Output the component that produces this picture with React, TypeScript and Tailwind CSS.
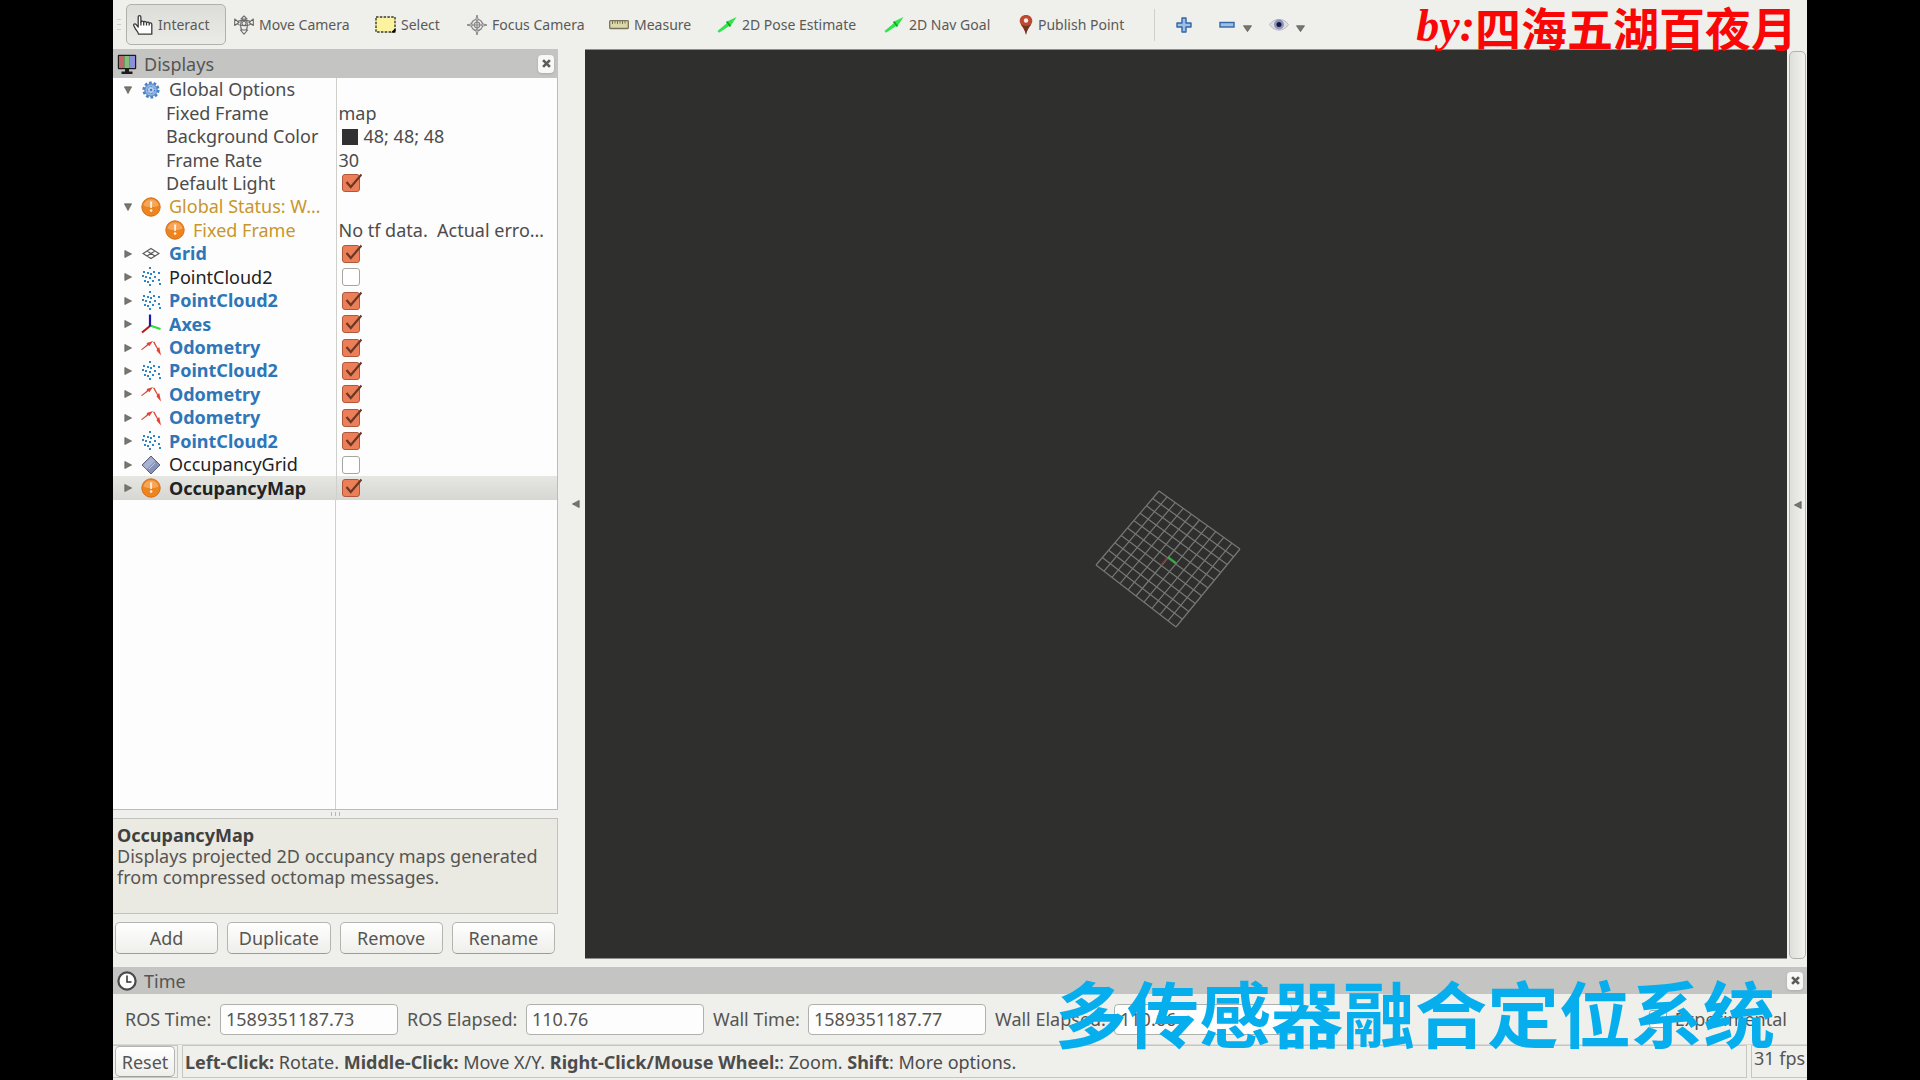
import type { ReactNode } from "react";
import clsx from "clsx";

/* ---------- icons ---------- */

function HandIcon() {
  return (
    <svg className="w-5 h-5 shrink-0" viewBox="0 0 20 20" fill="#fff" stroke="#3a3a3a" strokeWidth={1.3} strokeLinejoin="round">
      <path d="M5.2 12V2.2c0-2 2.7-2 2.7 0v5c.3-1.4 2.6-1.3 2.8.1.4-1.2 2.6-1 2.8.4.5-1 2.6-.8 2.7.6.5-.8 2.6-.6 2.600 1V19.200H5.500c0-2-1.500-3.200-3-5.200L.8 10.600C.2 9.200 2 8.200 3 9.400z" />
      <path d="M7.900 7v3.500M10.700 7.500v3M13.500 8v2.500M16.200 8.500v2" fill="none" />
    </svg>
  );
}

function MoveCameraIcon() {
  return (
    <svg className="w-5 h-5 shrink-0" viewBox="0 0 20 20" fill="#f4f4f2" stroke="#6a6a6a" strokeWidth={1.1} strokeLinejoin="round">
      <ellipse cx="10" cy="8" rx="7" ry="2.600" fill="none" />
      <ellipse cx="10" cy="10" rx="3.400" ry="6.500" fill="none" />
      <path d="M10 .8l3 3.200H7zM10 19.200l3.600-4.200H6.400zM.7 4l4.300 3.500L.7 10.500zM19.300 4L15 7.500l4.300 3z" />
      <circle cx="10" cy="8.500" r="2" />
    </svg>
  );
}

function SelectIcon() {
  return (
    <svg className="w-[21px] h-[17px] shrink-0" viewBox="0 0 21 17">
      <rect x="1" y="1" width="19" height="15" fill="#fbf3a0" stroke="#3d3b22" strokeWidth={1.400} strokeDasharray="2.500 1.300" />
      <path d="M20.500 12v4.500H16z" fill="#000" />
    </svg>
  );
}

function FocusIcon() {
  return (
    <svg className="w-5 h-5 shrink-0" viewBox="0 0 20 20" fill="none" stroke="#858585" strokeWidth={1.200}>
      <circle cx="10" cy="10" r="5.700" />
      <circle cx="10" cy="10" r="2.800" />
      <path d="M10 5v10M5 10h10" />
      <path d="M10 0L8.700 5h2.600zM10 20l-1.300-5h2.600zM0 10l5-1.300v2.600zM20 10l-5-1.300v2.600z" fill="#efefeb" strokeWidth={1} />
    </svg>
  );
}

function RulerIcon() {
  return (
    <svg className="w-5 h-[10px] shrink-0" viewBox="0 0 20 10">
      <rect x=".7" y=".7" width="18.600" height="7.800" rx=".8" fill="#dcd8a8" stroke="#77745a" strokeWidth={1.300} />
      <path d="M3.500 1v3M6 1v2.500M8.500 1v3M11 1v2.500M13.500 1v3M16 1v2.500" stroke="#77745a" />
    </svg>
  );
}

function ArrowIcon() {
  return (
    <svg className="w-5 h-4 shrink-0" viewBox="0 0 20 16">
      <path d="M19.500 0L9 5l.8 1.200L.5 14l1.500 1.800 9.800-6.600 1.200.9z" fill="#2ee648" />
      <path d="M9 5l4 5.100.8-1.600L10.500 4.300z" fill="#1a9c30" />
    </svg>
  );
}

function PinIcon() {
  return (
    <svg className="w-[14px] h-5 shrink-0" viewBox="0 0 14 20">
      <path d="M7 0C3 0 .7 2.700.7 6c0 4 5 6.500 6.300 13.800C8.300 12.500 13.300 10 13.300 6c0-3.300-2.300-6-6.300-6z" fill="#bd4a30" />
      <path d="M7 19.800C6 14.500 3.200 11.500 1.800 9c3 2.500 7.400 2.500 10.400 0C10.800 11.500 8 14.500 7 19.800z" fill="#6e3520" />
      <circle cx="7" cy="5.500" r="2.200" fill="#fbeee8" />
    </svg>
  );
}

function PlusIcon() {
  return (
    <svg className="w-4 h-4" viewBox="0 0 16 16">
      <path d="M6 1h4v5h5v4h-5v5H6v-5H1V6h5z" fill="#9cc0ea" stroke="#3465a4" strokeWidth={1.400} strokeLinejoin="round" />
    </svg>
  );
}

function MinusIcon() {
  return (
    <svg className="w-4 h-4" viewBox="0 0 16 16">
      <rect x="1" y="5.500" width="14" height="4.500" fill="#9cc0ea" stroke="#3465a4" strokeWidth={1.400} />
    </svg>
  );
}

function EyeIcon() {
  return (
    <svg className="w-5 h-5" viewBox="0 0 20 20">
      <path d="M.5 9.500C5 3 15 2.500 19.500 9.500 15 17 5 17 .5 9.500z" fill="#dedee2" stroke="#b9b9be" />
      <circle cx="10" cy="9.500" r="5" fill="#8c93bd" />
      <circle cx="10" cy="9.500" r="2.500" fill="#15163c" />
    </svg>
  );
}

function Caret({ className }: { className: string }) {
  return (
    <svg className={className} viewBox="0 0 10 10" preserveAspectRatio="none">
      <path d="M.5 1h9L5 9.500z" fill="#77776f" stroke="#55554f" strokeWidth={0.800} />
    </svg>
  );
}

function MonitorIcon() {
  return (
    <svg className="w-5 h-5 shrink-0" viewBox="0 0 20 20">
      <rect x=".8" y=".8" width="18.400" height="14.400" rx="1" fill="#1d1d1d" />
      <rect x="2" y="2" width="5.300" height="12" fill="#c06868" />
      <rect x="7.300" y="2" width="5.400" height="12" fill="#7fc07a" />
      <rect x="12.700" y="2" width="5.300" height="12" fill="#8d8fd8" />
      <path d="M8 15h4v2.500h3.500V20h-11v-2.500H8z" fill="#1d1d1d" />
    </svg>
  );
}

function ClockIcon() {
  return (
    <svg className="w-5 h-5 shrink-0" viewBox="0 0 20 20">
      <circle cx="10" cy="10" r="8.600" fill="#fff" stroke="#4a4a4a" strokeWidth={2.200} />
      <path d="M10 4.500V11h4.500" fill="none" stroke="#333" strokeWidth={1.500} />
    </svg>
  );
}

function GearIcon() {
  return (
    <svg className="w-[18px] h-[18px]" viewBox="0 0 18 18">
      <circle cx="9" cy="9" r="7.300" fill="none" stroke="#4a7fc0" strokeWidth={2.600} strokeDasharray="2.700 1.900" />
      <circle cx="9" cy="9" r="6.200" fill="#8db4e2" stroke="#4a7fc0" />
      <circle cx="9" cy="9" r="3.400" fill="#b9d2f0" stroke="#4a7fc0" strokeDasharray="2 1" />
      <circle cx="9" cy="9" r="1.300" fill="#4a7fc0" />
    </svg>
  );
}

function WarnIcon() {
  return (
    <svg className="w-5 h-5" viewBox="0 0 20 20">
      <circle cx="10" cy="10" r="9.200" fill="#ee8420" stroke="#d46f14" />
      <path d="M2.500 8.500a7.600 7.600 0 0 1 15 0c-4 2-11 2-15 0z" fill="#f6a65a" />
      <path d="M9 4.500h2.200l-.3 6.500H9.300z" fill="#fff1dc" />
      <circle cx="10.100" cy="13.600" r="1.300" fill="#fff1dc" />
    </svg>
  );
}

function GridIcon() {
  return (
    <svg className="w-[18px] h-5" viewBox="0 0 18 20" fill="none" stroke="#5a5a5a" strokeWidth={1.200}>
      <path d="M9 4.500L17 9.500 9 14.500 1 9.500zM5 7l8 5M13 7l-8 5" />
    </svg>
  );
}

const CLOUD_POINTS = [
  [9, 1], [3, 5], [13, 5], [18, 6], [7, 6], [2, 9], [10, 7], [14, 10],
  [5, 10], [9, 11], [4, 14], [12, 14], [18, 13], [7, 15], [9, 18], [19, 17],
];

function CloudIcon() {
  return (
    <svg className="w-5 h-5" viewBox="0 0 20 20">
      {CLOUD_POINTS.map(([x, y]) => (
        <rect key={`${x}-${y}`} x={x - 1} y={y - 1} width="2" height="2" fill="#2f86c6" />
      ))}
    </svg>
  );
}

function AxesIcon() {
  return (
    <svg className="w-5 h-5" viewBox="0 0 20 20" fill="none" strokeWidth={2.200}>
      <path d="M9 12L1 18.500" stroke="#c01818" />
      <path d="M9 11.500l10.500 3.500" stroke="#2ce03c" />
      <path d="M9 12.500V.5" stroke="#1a1aa8" />
    </svg>
  );
}

function OdometryIcon() {
  return (
    <svg className="w-5 h-5" viewBox="0 0 20 20" fill="#e04434">
      <path d="M0 11.500l6-5-.3-1.500L12 3 8.500 8 7.300 7.300 1 12z" />
      <path d="M12 4l1.300-.5 3.500 6.500 1.500-.8L20 17.500l-4.500-5 .7-1.300z" />
    </svg>
  );
}

function OccupancyIcon() {
  return (
    <svg className="w-5 h-5" viewBox="0 0 20 20">
      <path d="M10 1l9 9-9 9-9-9z" fill="#8793b6" stroke="#59637f" />
      <path d="M10 2l4 4-8.500 8.500L2 10z" fill="#a9b3cf" />
      <path d="M8 14l6-6" stroke="#c5cce0" />
    </svg>
  );
}

/* ---------- controls ---------- */

function CheckBox({ label, checked }: { label: string; checked: boolean }) {
  return (
    <span className="relative ml-[3px] flex w-[18px] h-[18px]">
      <input
        type="checkbox"
        aria-label={label}
        defaultChecked={checked}
        className="peer appearance-none w-[18px] h-[18px] rounded-[3px] border border-[#a5a5a1] bg-white checked:border-[#b0583c] checked:bg-[#ec7f58]"
      />
      <svg
        className="pointer-events-none absolute left-0 -top-px w-5 h-5 hidden peer-checked:block"
        viewBox="0 0 20 20"
        fill="none"
        stroke="#6b3826"
        strokeWidth={2.200}
      >
        <path d="M4.500 9l4.300 5L19.500 1.500" />
      </svg>
    </span>
  );
}

function CloseButton({ label }: { label: string }) {
  return (
    <button
      aria-label={label}
      className="w-4 h-[18px] rounded-[4px] bg-[#f8f8f6] flex items-center justify-center shadow-sm"
    >
      <svg className="w-[9px] h-[9px]" viewBox="0 0 10 10" stroke="#5c5c5c" strokeWidth={3}>
        <path d="M1.200 1.200l7.600 7.600M8.800 1.200L1.200 8.800" />
      </svg>
    </button>
  );
}

function PushButton({ children }: { children: ReactNode }) {
  return (
    <button className="h-8 rounded-[5px] border border-[#b4b4b0] border-b-[#9c9c98] bg-linear-to-b from-white to-[#eeeeeb] leading-[28px]">
      {children}
    </button>
  );
}

interface Tool {
  label: string;
  icon: ReactNode;
  width: string;
}

const tools: Tool[] = [
  { label: "Move Camera", icon: <MoveCameraIcon />, width: "w-[141px]" },
  { label: "Select", icon: <SelectIcon />, width: "w-[92px]" },
  { label: "Focus Camera", icon: <FocusIcon />, width: "w-[142px]" },
  { label: "Measure", icon: <RulerIcon />, width: "w-[108px]" },
  { label: "2D Pose Estimate", icon: <ArrowIcon />, width: "w-[167px]" },
  { label: "2D Nav Goal", icon: <ArrowIcon />, width: "w-[135px]" },
  { label: "Publish Point", icon: <PinIcon />, width: "w-[135px]" },
];

function Toolbar() {
  return (
    <header className="flex items-center h-[49px] shrink-0 text-sm text-[#5a5a57]">
      <span className="flex flex-col gap-1 w-[13px] pl-1" aria-hidden="true">
        <i className="h-px w-1 bg-[#cfcfca]" />
        <i className="h-px w-1 bg-[#cfcfca]" />
        <i className="h-px w-1 bg-[#cfcfca]" />
      </span>
      <button
        aria-pressed="true"
        className="flex items-center gap-[5px] w-[100px] h-[41px] pl-[6px] mr-2 rounded-[5px] border border-[#b0b0ac] bg-linear-to-b from-[#dcdcd9] to-[#ebebe8] whitespace-nowrap"
      >
        <HandIcon />
        Interact
      </button>
      {tools.map((t) => (
        <button key={t.label} className={clsx("flex items-center gap-[5px] h-10 shrink-0 whitespace-nowrap", t.width)}>
          {t.icon}
          {t.label}
        </button>
      ))}
      <span className="w-px h-8 mr-[21px] bg-[#d0d0cb]" />
      <button aria-label="Add tool" className="mr-[27px]">
        <PlusIcon />
      </button>
      <button aria-label="Remove tool" className="flex items-center gap-2 mr-[17px]">
        <MinusIcon />
        <Caret className="w-[9px] h-[7px] mt-2" />
      </button>
      <button aria-label="Toolbar visibility" className="flex items-center gap-[7px]">
        <EyeIcon />
        <Caret className="w-[9px] h-[7px] mt-2" />
      </button>
    </header>
  );
}

/* ---------- displays panel ---------- */

interface Row {
  name: string;
  icon?: ReactNode;
  state?: "open" | "closed";
  child?: boolean;
  tone?: string;
  value?: string;
  swatch?: boolean;
  checked?: boolean;
  selected?: boolean;
}

const ACTIVE = "text-[#2f76b8] font-bold";
const WARN = "text-[#c8962a]";

const rows: Row[] = [
  { name: "Global Options", icon: <GearIcon />, state: "open" },
  { name: "Fixed Frame", child: true, value: "map" },
  { name: "Background Color", child: true, value: "48; 48; 48", swatch: true },
  { name: "Frame Rate", child: true, value: "30" },
  { name: "Default Light", child: true, checked: true },
  { name: "Global Status: W…", icon: <WarnIcon />, state: "open", tone: WARN },
  { name: "Fixed Frame", icon: <WarnIcon />, child: true, tone: WARN, value: "No tf data.  Actual erro…" },
  { name: "Grid", icon: <GridIcon />, state: "closed", tone: ACTIVE, checked: true },
  { name: "PointCloud2", icon: <CloudIcon />, state: "closed", tone: "text-[#222]", checked: false },
  { name: "PointCloud2", icon: <CloudIcon />, state: "closed", tone: ACTIVE, checked: true },
  { name: "Axes", icon: <AxesIcon />, state: "closed", tone: ACTIVE, checked: true },
  { name: "Odometry", icon: <OdometryIcon />, state: "closed", tone: ACTIVE, checked: true },
  { name: "PointCloud2", icon: <CloudIcon />, state: "closed", tone: ACTIVE, checked: true },
  { name: "Odometry", icon: <OdometryIcon />, state: "closed", tone: ACTIVE, checked: true },
  { name: "Odometry", icon: <OdometryIcon />, state: "closed", tone: ACTIVE, checked: true },
  { name: "PointCloud2", icon: <CloudIcon />, state: "closed", tone: ACTIVE, checked: true },
  { name: "OccupancyGrid", icon: <OccupancyIcon />, state: "closed", tone: "text-[#222]", checked: false },
  { name: "OccupancyMap", icon: <WarnIcon />, state: "closed", tone: "text-[#222] font-bold", checked: true, selected: true },
];

function TreeRow({ row }: { row: Row }) {
  return (
    <tr className={clsx(row.selected && "bg-linear-to-b from-[#e6e6e3] to-[#d6d6d2]")}>
      <td className="p-0 border-r border-[#cfcfcc]">
        <div className={clsx("flex items-center pl-[11px] whitespace-pre", row.tone)}>
          {row.state && (
            <Caret className={clsx("w-2 h-2 shrink-0 mr-[9px]", row.state === "closed" && "-rotate-90")} />
          )}
          {row.icon && (
            <span className={clsx("w-5 shrink-0 flex justify-center mr-2", row.child && "ml-[41px]")}>{row.icon}</span>
          )}
          <span className={clsx(row.child && !row.icon && "ml-[42px]")}>{row.name}</span>
        </div>
      </td>
      <td className="p-0 pl-[2px]">
        <div className="flex items-center whitespace-pre">
          {row.swatch && <span className="w-4 h-4 ml-[3px] mr-[6px] bg-[#303030]" />}
          {row.value}
          {row.checked !== undefined && <CheckBox label={row.name} checked={row.checked} />}
        </div>
      </td>
    </tr>
  );
}

function DisplaysPanel() {
  return (
    <section className="w-[445px] shrink-0 flex flex-col">
      <div className="flex items-center h-[29px] px-1 bg-[#c4c4c2]">
        <MonitorIcon />
        <h2 className="flex-1 pl-[7px]">Displays</h2>
        <CloseButton label="Close Displays" />
      </div>
      <div className="flex-1 flex flex-col bg-[#fdfdfd] border-r border-b border-[#bcbcb9] text-[#4c4c4c]">
        <table className="w-full h-[422px] table-fixed border-collapse leading-[23px]">
          <colgroup>
            <col className="w-[223px]" />
            <col />
          </colgroup>
          <tbody>
            {rows.map((r, i) => (
              <TreeRow key={i} row={r} />
            ))}
          </tbody>
        </table>
        <div className="flex-1 w-[223px] border-r border-[#cfcfcc]" />
      </div>
      <div className="h-2 flex items-center justify-center gap-[3px]">
        <i className="w-px h-1 bg-[#b8b8b4]" />
        <i className="w-px h-1 bg-[#b8b8b4]" />
        <i className="w-px h-1 bg-[#b8b8b4]" />
      </div>
      <div className="h-24 pl-1 py-[6px] bg-[#eae9e2] border border-l-0 border-[#c2c2be] leading-[21px]">
        <h3 className="font-bold text-[#3f3f3f]">OccupancyMap</h3>
        <p>Displays projected 2D occupancy maps generated from compressed octomap messages.</p>
      </div>
      <div className="grid grid-cols-4 gap-[9px] pl-[2px] pr-[3px] pt-2 pb-[13px]">
        {["Add", "Duplicate", "Remove", "Rename"].map((b) => (
          <PushButton key={b}>{b}</PushButton>
        ))}
      </div>
    </section>
  );
}

/* ---------- 3D view ---------- */

const CELLS = Array.from({ length: 11 }, (_, i) => i / 10);

function RenderView() {
  // corners of the ground grid: top, right, bottom, left
  const [t, r, b, l] = [[64, 2], [145, 60], [81, 138], [1, 76]];
  const mix = (p: number[], q: number[], k: number) => [p[0] + (q[0] - p[0]) * k, p[1] + (q[1] - p[1]) * k];
  return (
    <main className="relative flex-1 bg-[#2f2f2d] border-t border-b border-[#8f8f8b]">
      <svg className="absolute left-[510px] top-[439px] w-[148px] h-[140px]" viewBox="0 0 148 140">
        <g stroke="#777775" strokeWidth={1.200}>
          {CELLS.map((k) => {
            const [a, c] = [mix(t, l, k), mix(r, b, k)];
            const [d, e] = [mix(t, r, k), mix(l, b, k)];
            return <path key={k} d={`M${a}L${c}M${d}L${e}`} />;
          })}
        </g>
        <path d="M72 69l-6 7" stroke="#7a3a36" strokeWidth={1.500} />
        <path d="M73 68l8 6" stroke="#27b53c" strokeWidth={1.800} />
      </svg>
    </main>
  );
}

/* ---------- time panel & status bar ---------- */

const times = [
  { id: "ros-time", label: "ROS Time:", value: "1589351187.73", width: "w-[95px]" },
  { id: "ros-elapsed", label: "ROS Elapsed:", value: "110.76", width: "w-[119px]" },
  { id: "wall-time", label: "Wall Time:", value: "1589351187.77", width: "w-[95px]" },
  { id: "wall-elapsed", label: "Wall Elapsed:", value: "110.66", width: "w-[119px]" },
];

function TimePanel() {
  return (
    <section className="shrink-0">
      <div className="flex items-center h-[27px] px-1 bg-[#c4c4c2]">
        <ClockIcon />
        <h2 className="flex-1 pl-[7px]">Time</h2>
        <CloseButton label="Close Time" />
      </div>
      <div className="flex items-center h-[50px] pl-3 pr-5 gap-[9px]">
        {times.map((t) => (
          <div key={t.id} className="flex items-center">
            <label htmlFor={t.id} className={clsx("whitespace-nowrap", t.width)}>
              {t.label}
            </label>
            <input
              id={t.id}
              defaultValue={t.value}
              className="w-[178px] h-[31px] px-[5px] rounded-[4px] border border-[#b0b0ac] bg-[#fdfdfd]"
            />
          </div>
        ))}
        <label className="ml-auto flex items-center gap-2">
          <input type="checkbox" className="appearance-none w-[18px] h-[18px] rounded-[3px] border border-[#a5a5a1] bg-white" />
          Experimental
        </label>
      </div>
    </section>
  );
}

function StatusBar() {
  return (
    <footer className="flex items-stretch gap-1 h-9 pb-[2px] shrink-0 border-t border-[#d8d8d4]">
      <div className="w-[65px] px-[2px] border border-l-0 border-[#c6c6c2] flex flex-col">
        <PushButton>Reset</PushButton>
      </div>
      <p className="flex-1 pl-[2px] border border-[#c6c6c2] leading-[32px] text-[#4c4c4c]">
        <b>Left-Click:</b> Rotate. <b>Middle-Click:</b> Move X/Y. <b>Right-Click/Mouse Wheel:</b>: Zoom. <b>Shift</b>: More
        options.
      </p>
      <p className="w-14 pl-[2px] border border-r-0 border-[#c6c6c2] leading-[24px] whitespace-nowrap">31 fps</p>
    </footer>
  );
}

export default function App() {
  return (
    <div className="min-h-screen flex bg-black px-[113px] font-['Noto_Sans',sans-serif] text-lg text-[#555552]">
      <div className="relative flex-1 min-w-0 flex flex-col bg-[#efefeb]">
        <Toolbar />
        <div className="flex-1 flex">
          <DisplaysPanel />
          <button aria-label="Collapse left panel" className="w-[27px] mb-2 flex items-center justify-end pr-[5px]">
            <Caret className="w-2 h-2 rotate-90" />
          </button>
          <div className="flex-1 flex mb-2">
            <RenderView />
            <button
              aria-label="Collapse right panel"
              className="w-[17px] ml-[2px] mr-px mt-[2px] rounded-[5px] border border-[#b0b0ac] bg-linear-to-r from-[#dededb] to-[#f2f2ef] flex items-center justify-center"
            >
              <Caret className="w-2 h-2 rotate-90" />
            </button>
          </div>
        </div>
        <TimePanel />
        <StatusBar />

        {/* watermarks */}
        <p className="pointer-events-none absolute right-[10px] top-0 flex text-[46px] leading-[52px] text-[#f90606] whitespace-nowrap">
          <span className="font-['Liberation_Serif',serif] italic font-bold">by:</span>
          <span className="font-['Noto_Sans_CJK_SC',sans-serif] font-bold">四海五湖百夜月</span>
        </p>
        <p className="pointer-events-none absolute right-8 bottom-6 font-['Noto_Sans_CJK_SC',sans-serif] font-bold text-[72px] leading-[90px] text-[#07aeee] whitespace-nowrap">
          多传感器融合定位系统
        </p>
      </div>
    </div>
  );
}
